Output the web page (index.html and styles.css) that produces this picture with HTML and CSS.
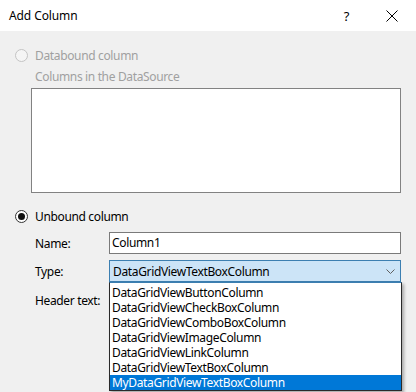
FILE: index.html
```html
<!DOCTYPE html>
<html>
<head>
<meta charset="utf-8">
<link rel="stylesheet" href="styles.css">
</head>
<body>
<div class="dialog">
  <div class="titlebar">
    <span class="title">Add Column</span>
    <span class="help">?</span>
    <svg class="close" width="12" height="12" viewBox="0 0 12 12"><path d="M0.5 0.5L11.5 11.5M11.5 0.5L0.5 11.5" stroke="#000" stroke-width="1" fill="none"/></svg>
  </div>
  <div class="content">
    <div class="radio-row disabled">
      <span class="radio"></span>
      <span>Databound column</span>
    </div>
    <div class="sublabel disabled">Columns in the DataSource</div>
    <div class="listbox"></div>
    <div class="radio-row unbound">
      <span class="radio checked"><span class="dot"></span></span>
      <span>Unbound column</span>
    </div>
    <div class="form">
      <div class="form-row">
        <span class="label">Name:</span>
        <div class="textbox">Column1</div>
      </div>
      <div class="form-row">
        <span class="label">Type:</span>
        <div class="combo">
          <span>DataGridViewTextBoxColumn</span>
          <svg class="chev" width="9" height="5" viewBox="0 0 9 5"><path d="M0.5 0.5L4.5 4.5L8.5 0.5" stroke="#606060" stroke-width="1" fill="none"/></svg>
        </div>
      </div>
      <div class="form-row header-row">
        <span class="label">Header text:</span>
      </div>
    </div>
    <ul class="dropdown">
      <li>DataGridViewButtonColumn</li>
      <li>DataGridViewCheckBoxColumn</li>
      <li>DataGridViewComboBoxColumn</li>
      <li>DataGridViewImageColumn</li>
      <li>DataGridViewLinkColumn</li>
      <li>DataGridViewTextBoxColumn</li>
      <li class="selected">MyDataGridViewTextBoxColumn</li>
    </ul>
  </div>
</div>
</body>
</html>
```
FILE: styles.css
```css
html, body {
  margin: 0;
  padding: 0;
}
body {
  width: 416px;
  height: 392px;
  overflow: hidden;
  font-family: "Noto Sans", "Open Sans", sans-serif;
  font-size: 12px;
  letter-spacing: -0.35px;
  color: #000;
  background: #f0f0f0;
}
.dialog {
  position: relative;
  width: 416px;
  height: 392px;
}
.titlebar {
  height: 31px;
  background: #fff;
  display: flex;
  align-items: center;
  padding-left: 9px;
}
.title {
  flex: 1;
  font-size: 12px;
  letter-spacing: -0.1px;
}
.help {
  font-size: 13px;
  margin-right: 37px;
}
.close {
  margin-right: 18px;
}
.content {
  background: #f0f0f0;
  height: 361px;
  padding-top: 16px;
  box-sizing: border-box;
}
.radio-row {
  display: flex;
  align-items: center;
  height: 16px;
  gap: 7px;
  padding-left: 15px;
  margin-bottom: 6px;
}
.radio {
  width: 13px;
  height: 13px;
  box-sizing: border-box;
  border-radius: 50%;
  border: 1px solid #c4c4c4;
  background: #f5f5f5;
  display: flex;
  align-items: center;
  justify-content: center;
}
.radio.checked {
  border-color: #333;
  background: #fff;
}
.dot {
  width: 7px;
  height: 7px;
  border-radius: 50%;
  background: #111;
}
.disabled {
  color: #a0a0a0;
}
.sublabel {
  height: 16px;
  line-height: 16px;
  padding-left: 35px;
  margin-bottom: 3px;
}
.listbox {
  margin-left: 31px;
  width: 370px;
  height: 105px;
  box-sizing: border-box;
  border: 1px solid #828282;
  background: #fff;
  margin-bottom: 15px;
}
.unbound {
  height: 17px;
  margin-bottom: 7px;
}
.form {
  display: flex;
  flex-direction: column;
  gap: 6px;
}
.form-row {
  display: flex;
  align-items: center;
  height: 22px;
}
.header-row {
  margin-top: 1px;
}
.label {
  width: 74px;
  padding-left: 35px;
}
.textbox {
  width: 292px;
  height: 22px;
  box-sizing: border-box;
  border: 1px solid #7a7a7a;
  background: #fff;
  padding-left: 2px;
  line-height: 20px;
}
.combo {
  width: 292px;
  height: 22px;
  box-sizing: border-box;
  border: 1px solid #3c7fb1;
  background: #cce4f7;
  padding-left: 3px;
  padding-right: 5px;
  display: flex;
  align-items: center;
  justify-content: space-between;
}
.dropdown {
  position: absolute;
  top: 282px;
  left: 109px;
  width: 293px;
  margin: 0;
  padding: 2px 0 0 0;
  list-style: none;
  box-sizing: border-box;
  border: 1px solid #2a2a2a;
  border-top-color: #3c7fb1;
  background: #fff;
  box-shadow: 2px 2px 3px rgba(0, 0, 0, 0.3);
}
.dropdown li {
  height: 15px;
  line-height: 15px;
  padding-left: 2px;
  white-space: nowrap;
}
.dropdown li.selected {
  background: #0078d7;
  color: #fff;
}
```
